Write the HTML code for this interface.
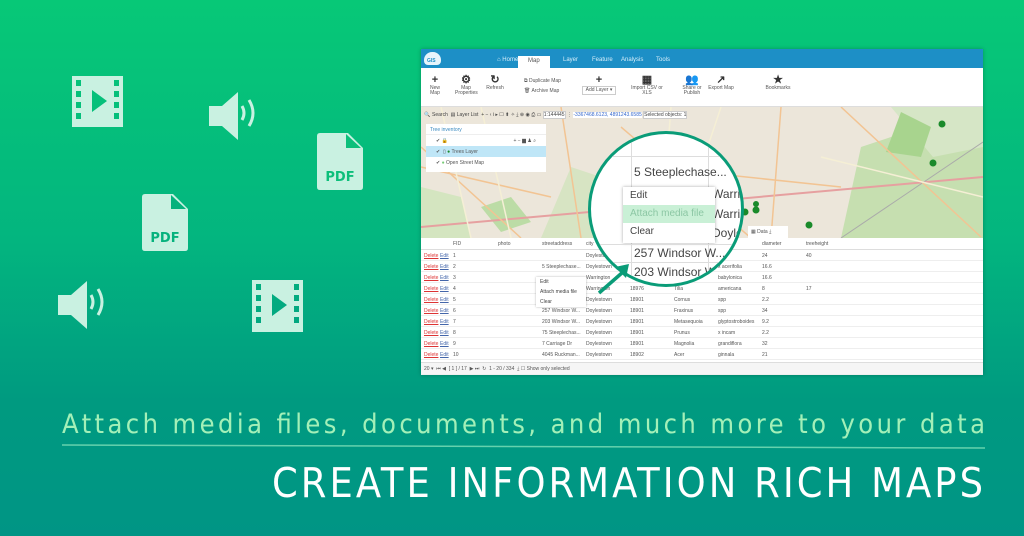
<!DOCTYPE html><html><head><meta charset="utf-8"><style>
*{margin:0;padding:0;box-sizing:border-box}
body{width:1024px;height:536px;overflow:hidden;position:relative;font-family:"Liberation Sans",sans-serif;background:linear-gradient(180deg,#07c877 0%,#03b57f 45%,#009a80 75%,#009585 100%)}
.abs{position:absolute}
.ss{position:absolute;left:421px;top:49px;width:562px;height:326px;background:#fff;overflow:hidden;box-shadow:0 0 4px rgba(0,0,0,.25)}
.hdr{position:absolute;left:0;top:0;width:562px;height:19px;background:#1d8fc6}
.tab{position:absolute;top:8px;font-size:6px;color:#d8eefa}
.tb{position:absolute;top:19px;width:562px;height:39px;background:#fff;border-bottom:1px solid #ddd}
.tbi{position:absolute;font-size:5px;color:#555;text-align:center;line-height:5px}
.tbi b{display:block;font-size:11px;color:#333;line-height:12px}
.map{position:absolute;top:58px;left:0;width:562px;height:131px;background:#ece6da;overflow:hidden}
.tbl{position:absolute;top:189px;left:0;width:562px;height:137px;background:#fff;font-size:5px;color:#555}
.row{position:absolute;left:0;width:562px;height:11px;border-bottom:1px solid #eee}
.row span{position:absolute;top:3px}
.d{color:#d33;text-decoration:underline}.e{color:#46a;text-decoration:underline}
.mg div{white-space:nowrap}
</style></head><body>
<svg class="abs" style="left:0;top:0" width="420" height="380" fill="#c9f1e1">
<g transform="translate(72,76)"><path d="M0 0h51v51H0zM4 4v6h5V4zM4 15v6h5v-6zM4 26v6h5v-6zM4 37v6h5v-6zM42 4v6h5V4zM42 15v6h5v-6zM42 26v6h5v-6zM42 37v6h5v-6zM20 14v22l15-11z" fill-rule="evenodd"/></g>
<g transform="translate(252,280)"><path d="M0 0h51v52H0zM4 4v6h5V4zM4 15v6h5v-6zM4 26v6h5v-6zM4 37v6h5v-6zM42 4v6h5V4zM42 15v6h5v-6zM42 26v6h5v-6zM42 37v6h5v-6zM20 14v22l15-11z" fill-rule="evenodd"/></g>
<g transform="translate(209,94)"><path d="M0 12h13l16-14v48L13 32H0z"/><path d="M33 12q4 7 0 14" stroke="#c9f1e1" stroke-width="3" fill="none"/><path d="M40 6q8 13 0 26" stroke="#c9f1e1" stroke-width="3" fill="none"/></g>
<g transform="translate(58,283)"><path d="M0 12h13l16-14v48L13 32H0z"/><path d="M33 12q4 7 0 14" stroke="#c9f1e1" stroke-width="3" fill="none"/><path d="M40 6q8 13 0 26" stroke="#c9f1e1" stroke-width="3" fill="none"/></g>
<g transform="translate(317,133)"><path d="M3 0h28l15 15v39q0 3-3 3H3q-3 0-3-3V3q0-3 3-3z"/><path d="M29 1v14h15z" fill="#0cbf7a"/><text x="23" y="48" font-family="DejaVu Sans,sans-serif" font-weight="bold" font-size="13" fill="#0cbf7a" text-anchor="middle">PDF</text></g>
<g transform="translate(142,194)"><path d="M3 0h28l15 15v39q0 3-3 3H3q-3 0-3-3V3q0-3 3-3z"/><path d="M29 1v14h15z" fill="#06b27d"/><text x="23" y="48" font-family="DejaVu Sans,sans-serif" font-weight="bold" font-size="13" fill="#06b27d" text-anchor="middle">PDF</text></g>
</svg>

<div class="ss">
 <div class="hdr">
  <div class="abs" style="left:3px;top:3px;width:17px;height:13px;background:#e6f4fb;border-radius:8px 8px 4px 4px;font-size:5px;color:#1d8fc6;font-weight:bold;padding:6px 0 0 3px">GIS</div>
  <span class="tab" style="left:76px">⌂ Home</span>
  <div class="abs" style="left:97px;top:7px;width:32px;height:12px;background:#fff;font-size:6px;color:#555;padding:2px 0 0 10px">Map</div>
  <span class="tab" style="left:142px">Layer</span><span class="tab" style="left:171px">Feature</span><span class="tab" style="left:200px">Analysis</span><span class="tab" style="left:235px">Tools</span>
 </div>
 <div class="tb">
  <div class="tbi" style="left:4px;top:6px;width:20px"><b>+</b>New Map</div>
  <div class="tbi" style="left:34px;top:6px;width:22px"><b>⚙</b>Map Properties</div>
  <div class="tbi" style="left:64px;top:6px;width:20px"><b>↻</b>Refresh</div>
  <div class="abs" style="left:103px;top:8px;font-size:5px;color:#555;line-height:10px">⧉ Duplicate Map<br>🗑 Archive Map</div>
  <div class="tbi" style="left:160px;top:6px;width:36px"><b>+</b><span style="display:inline-block;border:1px solid #ccc;padding:1px 3px">Add Layer ▾</span></div>
  <div class="tbi" style="left:210px;top:6px;width:32px"><b>▦</b>Import CSV or XLS</div>
  <div class="tbi" style="left:257px;top:6px;width:28px"><b>👥</b>Share or Publish</div>
  <div class="tbi" style="left:286px;top:6px;width:28px"><b>↗</b>Export Map</div>
  <div class="tbi" style="left:343px;top:6px;width:28px"><b>★</b>Bookmarks</div>
 </div>
 <div class="map">
  <svg width="562" height="131" class="abs">
   <path d="M440 40l60-20 62 15v96H420z" fill="#c6dfb0"/>
   <path d="M470 0h92v40l-50 10z" fill="#d6e6c6"/>
   <path d="M150 60l60 20 -10 51H120z" fill="#cfe3b9" opacity=".7"/>
   <path d="M0 80l40 10 10 41H0z" fill="#d4e5c0"/>
   <path d="M480 5l30 15-10 30-35-5z" fill="#a8d48e"/>
   <path d="M60 100l30-10 20 25-30 10z" fill="#bcdca6"/>
   <path d="M0 120L562 70" stroke="#e6a0a0" stroke-width="2"/>
   <path d="M420 131L562 35" stroke="#aaa" stroke-width="1"/>
   <path d="M140 0L160 131M360 0L350 131M0 40L100 131M200 20L330 131M420 0L560 130M0 60L130 90M230 60L420 80" stroke="#f2c493" stroke-width="1.5" fill="none"/>
   <path d="M20 0L50 131M300 0L280 60M400 50L562 90M60 0L90 131M250 0L240 131" stroke="#f5efd5" stroke-width="1.5"/>
   <g fill="#1a8a2a"><circle cx="521" cy="17" r="3.5"/><circle cx="512" cy="56" r="3.5"/><circle cx="324" cy="105" r="3.5"/><circle cx="335" cy="103" r="3.5"/><circle cx="335" cy="97" r="3"/><circle cx="388" cy="118" r="3.5"/></g>
  </svg>
  <div class="abs" style="left:2px;top:5px;width:380px;height:10px;font-size:5px;color:#444;white-space:nowrap">&nbsp;🔍 Search &nbsp;▤ Layer List &nbsp;+ − ‹ i ▸ ☐ ⬍ ✧ ⤓ ⊕ ◉ ⎙ ▭ <span style="border:1px solid #ccc;background:#fff">1:144445</span> ⋮ <span style="color:#36c;background:#fff">-3367468.6123, 4891243.6585</span> <span style="background:#fff;border:1px solid #ccc">Selected objects: 1</span></div>
  <div class="abs" style="left:5px;top:17px;width:120px;height:48px;background:#fff;font-size:5px;color:#555">
   <div style="color:#3a8ac0;padding:3px 4px;border-bottom:1px solid #eee;height:11px">Tree inventory</div>
   <div style="height:11px;padding:3px 10px">✔ 🔒<span style="float:right">+ − ▆ ♟ ⌕</span></div>
   <div style="height:11px;padding:3px 10px;background:#bfe6f7">✔ &nbsp;▯ <span style="color:#1a8a2a">●</span> Trees Layer</div>
   <div style="height:11px;padding:3px 10px">✔ <span style="color:#7c7">●</span> Open Street Map</div>
  </div>
  <div class="abs" style="left:327px;top:119px;width:40px;height:12px;background:#fff;font-size:5px;color:#555;padding:3px">▦ Data ⤓</div>
 </div>
 <div class="tbl">
  <div class="row" style="top:0;height:12px;border-bottom:1px solid #ddd"><span style="left:32px">FID</span><span style="left:77px">photo</span><span style="left:121px">streetaddress</span><span style="left:165px">city</span><span style="left:341px">diameter</span><span style="left:385px">treeheight</span></div>
  <div class="row" style="top:12px"><span class="d" style="left:3px">Delete</span><span class="e" style="left:19px">Edit</span><span style="left:32px">1</span><span style="left:165px">Doylestown</span><span style="left:341px">24</span><span style="left:385px">40</span></div>
  <div class="row" style="top:23px"><span class="d" style="left:3px">Delete</span><span class="e" style="left:19px">Edit</span><span style="left:32px">2</span><span style="left:121px">5 Steeplechase...</span><span style="left:165px">Doylestown</span><span style="left:297px">x acerifolia</span><span style="left:341px">16.6</span></div>
  <div class="row" style="top:34px"><span class="d" style="left:3px">Delete</span><span class="e" style="left:19px">Edit</span><span style="left:32px">3</span><span style="left:165px">Warrington</span><span style="left:297px">babylonica</span><span style="left:341px">16.6</span></div>
  <div class="row" style="top:45px"><span class="d" style="left:3px">Delete</span><span class="e" style="left:19px">Edit</span><span style="left:32px">4</span><span style="left:165px">Warrington</span><span style="left:209px">18976</span><span style="left:253px">Tilia</span><span style="left:297px">americana</span><span style="left:341px">8</span><span style="left:385px">17</span></div>
  <div class="row" style="top:56px"><span class="d" style="left:3px">Delete</span><span class="e" style="left:19px">Edit</span><span style="left:32px">5</span><span style="left:165px">Doylestown</span><span style="left:209px">18901</span><span style="left:253px">Cornus</span><span style="left:297px">spp</span><span style="left:341px">2.2</span></div>
  <div class="row" style="top:67px"><span class="d" style="left:3px">Delete</span><span class="e" style="left:19px">Edit</span><span style="left:32px">6</span><span style="left:121px">257 Windsor W...</span><span style="left:165px">Doylestown</span><span style="left:209px">18901</span><span style="left:253px">Fraxinus</span><span style="left:297px">spp</span><span style="left:341px">34</span></div>
  <div class="row" style="top:78px"><span class="d" style="left:3px">Delete</span><span class="e" style="left:19px">Edit</span><span style="left:32px">7</span><span style="left:121px">203 Windsor W...</span><span style="left:165px">Doylestown</span><span style="left:209px">18901</span><span style="left:253px">Metasequoia</span><span style="left:297px">glyptostroboides</span><span style="left:341px">9.2</span></div>
  <div class="row" style="top:89px"><span class="d" style="left:3px">Delete</span><span class="e" style="left:19px">Edit</span><span style="left:32px">8</span><span style="left:121px">75 Steeplechas...</span><span style="left:165px">Doylestown</span><span style="left:209px">18901</span><span style="left:253px">Prunus</span><span style="left:297px">x incam</span><span style="left:341px">2.2</span></div>
  <div class="row" style="top:100px"><span class="d" style="left:3px">Delete</span><span class="e" style="left:19px">Edit</span><span style="left:32px">9</span><span style="left:121px">7 Carriage Dr</span><span style="left:165px">Doylestown</span><span style="left:209px">18901</span><span style="left:253px">Magnolia</span><span style="left:297px">grandiflora</span><span style="left:341px">32</span></div>
  <div class="row" style="top:111px"><span class="d" style="left:3px">Delete</span><span class="e" style="left:19px">Edit</span><span style="left:32px">10</span><span style="left:121px">4045 Ruckman...</span><span style="left:165px">Doylestown</span><span style="left:209px">18902</span><span style="left:253px">Acer</span><span style="left:297px">ginnala</span><span style="left:341px">21</span></div>
  <div class="row" style="top:124px;height:13px;background:#f5f5f5;border-top:1px solid #ddd"><span style="left:3px">20 ▾ &nbsp;⏮ ◀ &nbsp;[ 1 ] / 17 &nbsp;▶ ⏭ &nbsp;↻ &nbsp;1 - 20 / 334 &nbsp;⤓ ☐ Show only selected</span></div>
  <div class="abs" style="left:115px;top:39px;width:50px;height:30px;background:#fff;box-shadow:0 0 2px rgba(0,0,0,.3);font-size:5px;color:#444;line-height:10px;padding-left:4px">Edit<br>Attach media file<br>Clear</div>
 </div>
</div>

<div class="abs mg" style="left:588px;top:131px;width:156px;height:156px;border-radius:50%;border:3px solid #0a9c78;background:#fff;overflow:hidden;font-size:12px;color:#444;font-family:'Liberation Sans',sans-serif">
 <div class="abs" style="left:40px;top:0;width:1px;height:160px;background:#ddd"></div>
 <div class="abs" style="left:117px;top:0;width:1px;height:160px;background:#ddd"></div>
 <div class="abs" style="left:0;top:22px;width:160px;height:1px;background:#ddd"></div>
 <div class="abs" style="left:43px;top:31px">5 Steeplechase... &nbsp;Doy</div>
 <div class="abs" style="left:121px;top:53px">Warrin</div>
 <div class="abs" style="left:121px;top:73px">Warrin</div>
 <div class="abs" style="left:121px;top:92px">Doyle</div>
 <div class="abs" style="left:32px;top:53px;width:92px;height:56px;background:#fff;box-shadow:0 0 3px rgba(0,0,0,.35);font-size:10px;line-height:18px">
  <div style="padding-left:7px">Edit</div>
  <div style="padding-left:7px;background:#c9f0d6;color:#8cc7a4">Attach media file</div>
  <div style="padding-left:7px">Clear</div>
 </div>
 <div class="abs" style="left:0;top:110px;width:160px;height:1px;background:#ddd"></div>
 <div class="abs" style="left:43px;top:112px">257 Windsor W... &nbsp;Doy</div>
 <div class="abs" style="left:0;top:128px;width:160px;height:1px;background:#ddd"></div>
 <div class="abs" style="left:43px;top:131px">203 Windsor W...</div>
</div>
<svg class="abs" style="left:595px;top:262px" width="40" height="34"><path d="M4 31L28 10" stroke="#0a9c78" stroke-width="3.5"/><path d="M20 5L34 2L31 16z" fill="#0a9c78"/></svg>

<svg class="abs" style="left:0;top:395px" width="1024" height="120">
 <text x="62" y="38" textLength="923" lengthAdjust="spacing" font-family="Liberation Sans Narrow,DejaVu Sans Condensed,sans-serif" font-size="27" fill="#a3f0b8">Attach media files, documents, and much more to your data</text>
 <line x1="62" y1="50" x2="985" y2="53" stroke="#7fe0b8" stroke-width="1.5" opacity=".8"/>
 <text x="272" y="102" textLength="711" lengthAdjust="spacing" font-family="Liberation Sans Narrow,DejaVu Sans Condensed,sans-serif" font-size="41" fill="#ffffff">CREATE INFORMATION RICH MAPS</text>
</svg>
</body></html>
